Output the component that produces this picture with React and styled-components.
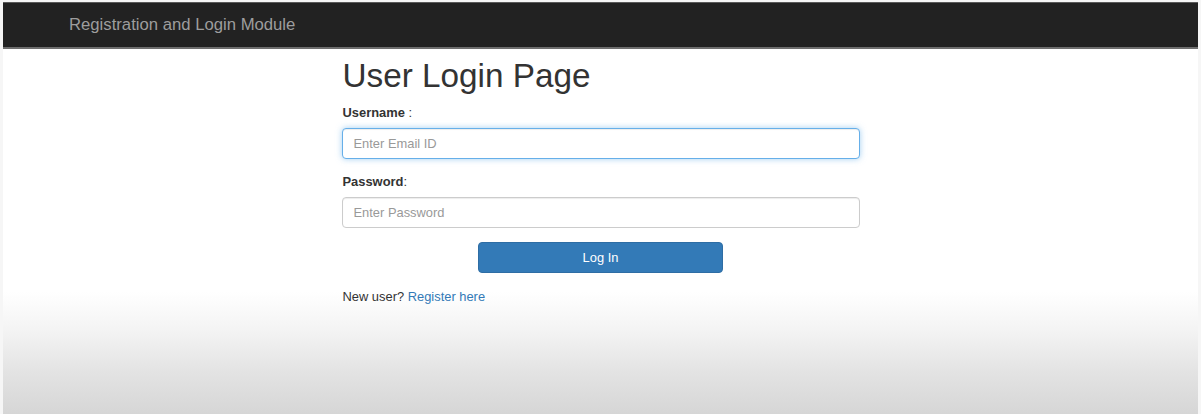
import React from 'react';
import styled, { createGlobalStyle } from 'styled-components';

const Global = createGlobalStyle`
  html, body {
    margin: 0;
    padding: 0;
    height: 100%;
    background: #f6f6f6;
    font-family: "Liberation Sans", Arial, Helvetica, sans-serif;
  }
  #root {
    height: 100%;
  }
`;

const Frame = styled.div`
  box-sizing: border-box;
  height: 414px;
  padding: 2px 3px 0 3px;
  display: flex;
  flex-direction: column;
`;

const Screen = styled.div`
  flex: 1;
  display: flex;
  flex-direction: column;
  background: linear-gradient(to bottom, #ffffff 0px, #ffffff 290px, #f3f3f3 330px, #e3e3e3 370px, #d6d6d6 412px);
`;

const Navbar = styled.nav`
  box-sizing: border-box;
  height: 47px;
  background: #222222;
  border-top: 1px solid #5a5a5a;
  border-bottom: 2px solid #6e6e6e;
  display: flex;
  align-items: center;
  padding-left: 66px;
`;

const Brand = styled.a`
  color: #9d9d9d;
  font-size: 16.7px;
  text-decoration: none;
  margin-top: -1px;
`;

const Main = styled.main`
  width: 518px;
  margin: 0 auto;
  display: flex;
  flex-direction: column;
`;

const Title = styled.h1`
  margin: 9px 0 0 1px;
  font-size: 33.3px;
  font-weight: 400;
  color: #333;
  line-height: 36px;
`;

const Label = styled.label`
  display: block;
  font-size: 12.9px;
  font-weight: 700;
  color: #333;
  margin: ${p => p.$top}px 0 0 1px;
  line-height: 15px;

  span {
    font-weight: 400;
  }
`;

const Input = styled.input`
  box-sizing: border-box;
  width: 518px;
  height: 31px;
  margin-top: ${p => p.$top}px;
  padding: 0 11px;
  font-family: "Liberation Sans", Arial, sans-serif;
  font-size: 12.9px;
  color: #555;
  background: #fff;
  border-radius: 4px;
  outline: none;
  border: 1px solid ${p => (p.$focus ? '#66afe9' : '#cccccc')};
  box-shadow: ${p =>
    p.$focus
      ? 'inset 0 1px 1px rgba(0,0,0,.075), 0 0 6px rgba(102,175,233,.6)'
      : 'inset 0 1px 1px rgba(0,0,0,.075)'};

  &::placeholder {
    color: #999;
  }
`;

const ButtonRow = styled.div`
  display: flex;
  justify-content: center;
  margin-top: 14px;
`;

const Button = styled.button`
  width: 245px;
  height: 31px;
  background: #337ab7;
  border: 1px solid #2e6da4;
  border-radius: 4px;
  color: #fff;
  font-family: "Liberation Sans", Arial, sans-serif;
  font-size: 12.9px;
  cursor: pointer;
`;

const Footer = styled.p`
  margin: 16px 0 0 1px;
  font-size: 12.9px;
  color: #333;
  line-height: 15px;

  a {
    color: #337ab7;
    text-decoration: none;
  }
`;

export default function App() {
  return (
    <>
      <Global />
      <Frame>
        <Screen>
          <Navbar>
            <Brand href="#">Registration and Login Module</Brand>
          </Navbar>
          <Main>
            <Title>User Login Page</Title>
            <Label $top={11}>Username <span>:</span></Label>
            <Input $top={8} $focus placeholder="Enter Email ID" />
            <Label $top={15}>Password<span>:</span></Label>
            <Input $top={8} type="password" placeholder="Enter Password" />
            <ButtonRow>
              <Button>Log In</Button>
            </ButtonRow>
            <Footer>New user? <a href="#">Register here</a></Footer>
          </Main>
        </Screen>
      </Frame>
    </>
  );
}
